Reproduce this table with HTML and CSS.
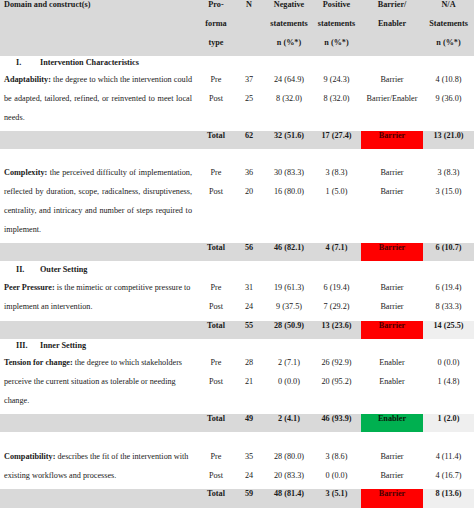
FILE: index.html
```html
<!DOCTYPE html>
<html>
<head>
<meta charset="utf-8">
<link rel="stylesheet" href="styles.css">
</head>
<body>
<table class="tbl">
  <colgroup>
    <col class="c1"><col class="c2"><col class="c3"><col class="c4"><col class="c5"><col class="c6"><col class="c7">
  </colgroup>
  <tr class="head">
    <td class="desc"><div class="hin">Domain and construct(s)</div></td>
    <td><div class="hin">Pro-<br>forma<br>type</div></td>
    <td><div class="hin">N</div></td>
    <td><div class="hin">Negative<br>statements<br>n (%*)</div></td>
    <td><div class="hin">Positive<br>statements<br>n (%*)</div></td>
    <td><div class="hin">Barrier/<br>Enabler</div></td>
    <td><div class="hin">N/A<br>Statements<br>n (%*)</div></td>
  </tr>

  <tr class="sec s1">
    <td class="desc"><span class="num">I.</span>Intervention Characteristics</td>
    <td></td><td></td><td></td><td></td><td></td><td></td>
  </tr>
  <tr class="item i1">
    <td class="desc"><span class="ln j"><b>Adaptability:</b> the degree to which the intervention could</span><span class="ln j">be adapted, tailored, refined, or reinvented to meet local</span><span class="ln">needs.</span></td>
    <td>Pre<br>Post</td>
    <td>37<br>25</td>
    <td>24 (64.9)<br>8 (32.0)</td>
    <td>9 (24.3)<br>8 (32.0)</td>
    <td>Barrier<br>Barrier/Enabler</td>
    <td>4 (10.8)<br>9 (36.0)</td>
  </tr>
  <tr class="total t1">
    <td></td><td>Total</td><td>62</td><td>32 (51.6)</td><td>17 (27.4)</td><td class="bar">Barrier</td><td>13 (21.0)</td>
  </tr>

  <tr class="item i2">
    <td class="desc"><span class="ln j"><b>Complexity:</b> the perceived difficulty of implementation,</span><span class="ln j">reflected by duration, scope, radicalness, disruptiveness,</span><span class="ln j">centrality, and intricacy and number of steps required to</span><span class="ln">implement.</span></td>
    <td>Pre<br>Post</td>
    <td>36<br>20</td>
    <td>30 (83.3)<br>16 (80.0)</td>
    <td>3 (8.3)<br>1 (5.0)</td>
    <td>Barrier<br>Barrier</td>
    <td>3 (8.3)<br>3 (15.0)</td>
  </tr>
  <tr class="total t2">
    <td></td><td>Total</td><td>56</td><td>46 (82.1)</td><td>4 (7.1)</td><td class="bar">Barrier</td><td>6 (10.7)</td>
  </tr>

  <tr class="sec s2">
    <td class="desc"><span class="num">II.</span>Outer Setting</td>
    <td></td><td></td><td></td><td></td><td></td><td></td>
  </tr>
  <tr class="item i3">
    <td class="desc"><span class="ln"><b>Peer Pressure:</b> is the mimetic or competitive pressure to</span><span class="ln">implement an intervention.</span></td>
    <td>Pre<br>Post</td>
    <td>31<br>24</td>
    <td>19 (61.3)<br>9 (37.5)</td>
    <td>6 (19.4)<br>7 (29.2)</td>
    <td>Barrier<br>Barrier</td>
    <td>6 (19.4)<br>8 (33.3)</td>
  </tr>
  <tr class="total t3 light">
    <td></td><td>Total</td><td>55</td><td>28 (50.9)</td><td>13 (23.6)</td><td class="bar">Barrier</td><td>14 (25.5)</td>
  </tr>

  <tr class="sec s3">
    <td class="desc"><span class="num">III.</span>Inner Setting</td>
    <td></td><td></td><td></td><td></td><td></td><td></td>
  </tr>
  <tr class="item i4">
    <td class="desc"><span class="ln"><b>Tension for change:</b> the degree to which stakeholders</span><span class="ln">perceive the current situation as tolerable or needing</span><span class="ln">change.</span></td>
    <td>Pre<br>Post</td>
    <td>28<br>21</td>
    <td>2 (7.1)<br>0 (0.0)</td>
    <td>26 (92.9)<br>20 (95.2)</td>
    <td>Enabler<br>Enabler</td>
    <td>0 (0.0)<br>1 (4.8)</td>
  </tr>
  <tr class="total t4 light">
    <td></td><td>Total</td><td>49</td><td>2 (4.1)</td><td>46 (93.9)</td><td class="ena">Enabler</td><td>1 (2.0)</td>
  </tr>

  <tr class="item i5">
    <td class="desc"><span class="ln"><b>Compatibility:</b> describes the fit of the intervention with</span><span class="ln">existing workflows and processes.</span></td>
    <td>Pre<br>Post</td>
    <td>35<br>24</td>
    <td>28 (80.0)<br>20 (83.3)</td>
    <td>3 (8.6)<br>0 (0.0)</td>
    <td>Barrier<br>Barrier</td>
    <td>4 (11.4)<br>4 (16.7)</td>
  </tr>
  <tr class="total t5 light">
    <td></td><td>Total</td><td>59</td><td>48 (81.4)</td><td>3 (5.1)</td><td class="bar">Barrier</td><td>8 (13.6)</td>
  </tr>
</table>
</body>
</html>
```

FILE: styles.css
```css
html, body {
  margin: 0;
  padding: 0;
  background: #ffffff;
}

body {
  font-family: "Liberation Serif", "Times New Roman", serif;
  font-size: 8.2px;
  color: #1a1a1a;
  overflow: hidden;
}

.tbl {
  width: 474px;
  table-layout: fixed;
  border-collapse: collapse;
  border-spacing: 0;
}

.c1 { width: 200px; }
.c2 { width: 32px; }
.c3 { width: 34px; }
.c4 { width: 46px; }
.c5 { width: 49px; }
.c6 { width: 62px; }
.c7 { width: 51px; }

.tbl td {
  padding: 0;
  vertical-align: top;
  text-align: center;
  line-height: 19px;
  white-space: nowrap;
}

.tbl td.desc {
  text-align: left;
  padding-left: 4px;
  padding-right: 8px;
}

/* header */
.head td {
  background: #d9d9d9;
  height: 56px;
  font-weight: bold;
  overflow: hidden;
}
.hin {
  margin-top: -5px;
  line-height: 19px;
}

/* section headings */
.sec td {
  font-weight: bold;
}
.sec .num {
  display: inline-block;
  width: 24px;
  padding-left: 12px;
}
.s1 td { height: 14px; line-height: 14px; }
.s2 td { height: 17px; line-height: 17px; }
.s3 td { height: 14px; line-height: 14px; }

/* construct rows */
.ln {
  display: block;
  line-height: 19px;
}
.ln.j {
  text-align: justify;
  text-align-last: justify;
}

.i1 td { height: 61px; }
.i2 td { height: 80px; padding-top: 14px; }
.i3 td { height: 43px; }
.i4 td { height: 61px; }
.i5 td { height: 42px; padding-top: 15px; }

/* totals */
.total td {
  background: #d9d9d9;
  font-weight: bold;
  line-height: 10px;
  height: 18px;
}
.total.t5 td { height: 19px; }
.total.light td:last-child {
  background: #efefef;
}
.total td.bar {
  background: #ff0000;
  color: #4a0000;
}
.total td.ena {
  background: #00b050;
  color: #0b1a0b;
}
```
